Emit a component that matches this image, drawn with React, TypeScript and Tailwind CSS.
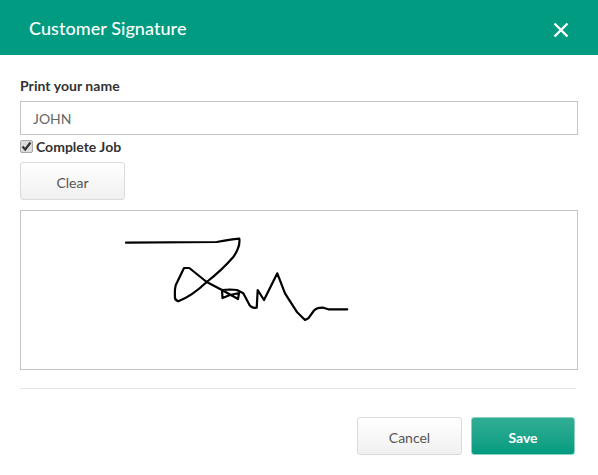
export default function App() {
  return (
    <div className="flex h-[475px] w-[598px] flex-col overflow-hidden bg-white font-['Lato',sans-serif] text-[#333]">
      {/* Header */}
      <div className="flex h-[55px] items-center justify-between bg-[#009b80] pl-[29px] pr-[29px] text-white">
        <h4 className="text-[18px] font-medium leading-none tracking-[0.06px]">Customer Signature</h4>
        <svg width="16" height="16" viewBox="0 0 16 16" className="mt-[4px]">
          <path d="M1.5 1.5 L14.5 14.5 M14.5 1.5 L1.5 14.5" stroke="white" strokeWidth="2.4" fill="none" />
        </svg>
      </div>

      <div className="flex flex-col px-5 pt-[23px]">
        <label className="text-[14px] font-bold leading-4 tracking-[0.05px] text-[#333]">Print your name</label>
        <input
          readOnly
          value="JOHN"
          className="mt-[7px] h-[34px] w-[558px] border border-[#c4c4c4] bg-white px-3 text-[14px] text-[#666] outline-none"
        />
        <label className="mt-px flex h-5 items-center text-[14px] font-bold leading-5">
          <span className="mr-[3px] flex h-[13px] w-[13px] items-center justify-center rounded-[2px] border border-[#a8a8a8] bg-[#dcdcdc]">
            <svg width="11" height="11" viewBox="0 0 11 11">
              <path d="M1.500 5.500 L4.200 8.500 L9.500 1.500" stroke="#333" strokeWidth="2.200" fill="none" />
            </svg>
          </span>
          <span className="pt-px">Complete Job</span>
        </label>
        <button className="mt-[6px] h-[38px] w-[105px] rounded-[3px] border border-[#d8dcdc] bg-gradient-to-b from-white to-[#f0f0f0] pt-[2px] text-[14px] text-[#555]">
          Clear
        </button>

        {/* Signature pad */}
        <div className="mt-[10px] h-[160px] w-[558px] border border-[#c4c4c4] bg-white">
          <svg width="556" height="158" viewBox="21 211 556 158" className="block">
            <path
              d="M126 242.700 L216.700 242 Q230 239.500 239.300 238.700 Q240.500 247 233.300 257 Q222 270 206.700 282 Q192 296 178.300 301.300 Q174.500 300 175 297 Q174.500 290 175.700 285.300 L184 268 L189.300 268 L206.700 282 L222 290 L238 299 L239 293 L230 295 L222.500 298 L222 290 L230 289.500 L237 290 L243.300 293.300 L249 304 Q251 308.500 256.700 307.700 L257.700 290 L264 300 L277.300 273.300 L285 293.300 L296.700 311.700 L305 320 L308.300 318.300 L314 310.500 Q317 307.500 323.300 307.700 L328.300 309.300 L347.300 309.300"
              fill="none"
              stroke="black"
              strokeWidth="2.200"
              strokeLinejoin="round"
              strokeLinecap="round"
            />
          </svg>
        </div>

        <hr className="mt-[18px] w-[556px] border-t border-[#e5e5e5]" />

        <div className="mt-[28px] flex w-[555px] justify-end gap-[9px]">
          <button className="h-[38px] w-[105px] rounded-[3px] border border-[#d8dcdc] bg-gradient-to-b from-white to-[#f0f0f0] pt-[2px] text-[14px] text-[#555]">
            Cancel
          </button>
          <button className="h-[38px] w-[104px] rounded-[3px] border border-[#8fd0c2] bg-gradient-to-b from-[#2fae95] to-[#009b80] pt-[2px] text-[14px] font-bold text-white">
            Save
          </button>
        </div>
      </div>
    </div>
  );
}
